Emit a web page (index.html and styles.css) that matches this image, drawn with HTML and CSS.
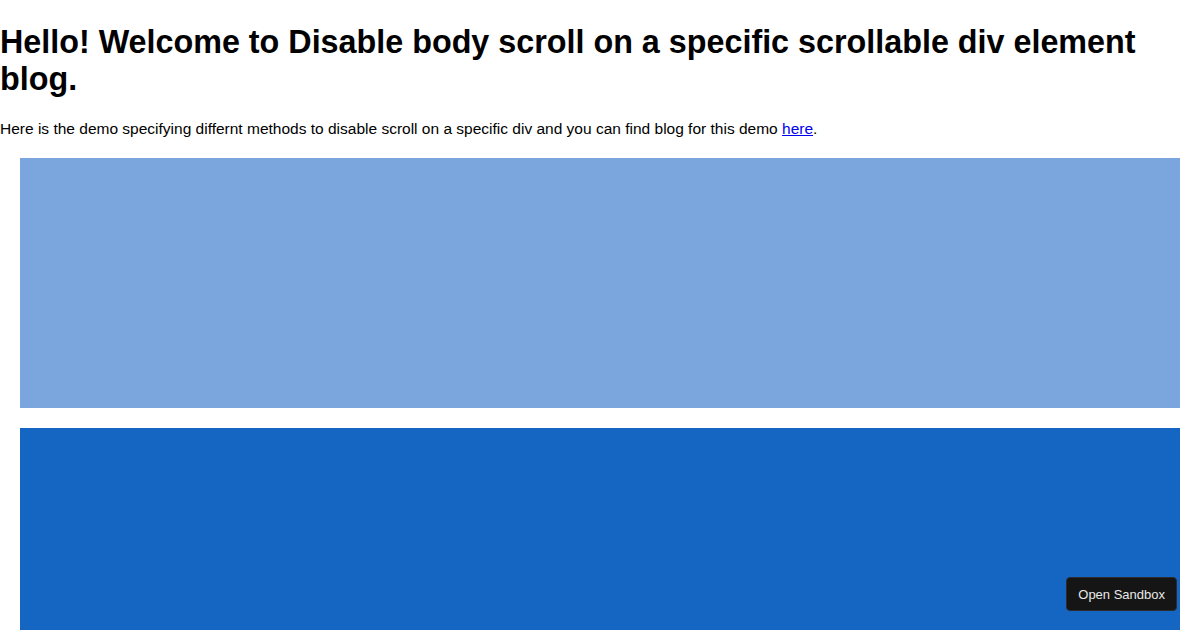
FILE: index.html
```html
<!DOCTYPE html>
<html lang="en">
  <head>
    <meta charset="UTF-8" />
    <meta name="viewport" content="width=device-width, initial-scale=1.0" />
    <title>Disable body scroll</title>
    <link rel="stylesheet" href="styles.css">
  </head>
  <body>
    <h1>Hello! Welcome to Disable body scroll on a specific scrollable div element blog.</h1>
    <p>
      Here is the demo specifying differnt methods to disable scroll on a
      specific div and you can find blog for this demo
      <a href="#">here</a>.
    </p>
    <div class="boxes">
      <div class="box light"></div>
      <div class="box dark"></div>
      <div class="box light"></div>
    </div>
    <a class="sandbox-btn" href="#">Open Sandbox</a>
  </body>
</html>
```

FILE: styles.css
```css
body {
  font-family: "Liberation Sans", Arial, sans-serif;
  margin: 0;
}
h1 {
  font-size: 32.3px;
  margin: 24px 0 21.5px;
}
p {
  font-size: 15.5px;
  margin: 0 0 16px;
}
a {
  color: #0000ee;
}
.boxes {
  padding: 4.6px 20px 20px;
}
.box {
  height: 250px;
  margin-bottom: 20px;
}
.light {
  background: #7aa6dd;
}
.dark {
  background: #1565c2;
}
/* floating link pinned to the corner */
.sandbox-btn {
  position: fixed;
  right: 23px;
  bottom: 19px;
  background: #151515;
  color: #e8e8e8;
  border: 1px solid #2c2c2c;
  border-radius: 4px;
  font-size: 13px;
  padding: 8.5px 11px;
  text-decoration: none;
  font-family: "Liberation Sans", Arial, sans-serif;
}
```
